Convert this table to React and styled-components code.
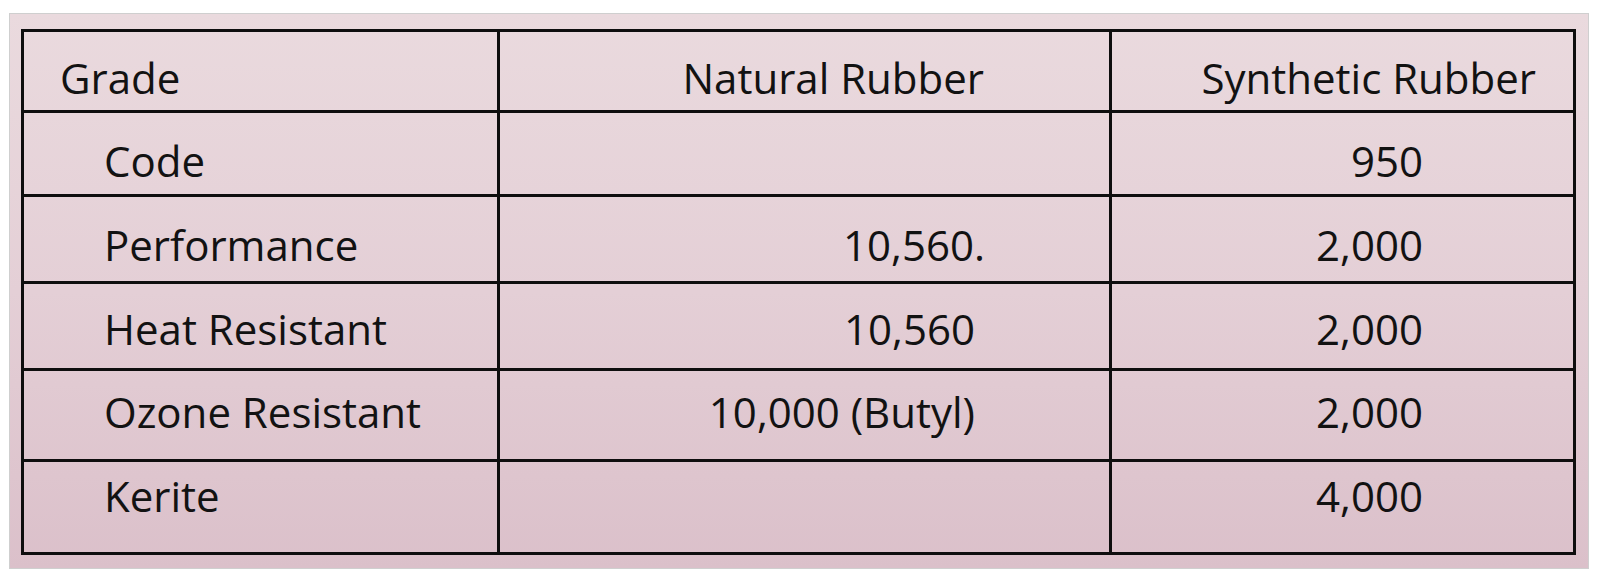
import React from 'react';
import styled, { createGlobalStyle } from 'styled-components';

const GlobalStyle = createGlobalStyle`
  html, body {
    margin: 0;
    padding: 0;
    background: #ffffff;
  }
  body {
    font-family: "Open Sans", "Noto Sans", sans-serif;
  }
`;

const Page = styled.div`
  padding: 13px 11px 10px 9px;
`;

const Panel = styled.div`
  width: 1580px;
  height: 556px;
  box-sizing: border-box;
  border: 1px solid #cfcfcf;
  background: linear-gradient(180deg, #eadade 0%, #e4cfd6 50%, #dbc0ca 100%);
  padding: 15px 14px 0 11px;
`;

const Table = styled.table`
  width: 1552px;
  table-layout: fixed;
  border-collapse: collapse;
  border: 3.5px solid #0e0e0e;
  color: #121212;
  font-size: 42px;
`;

const Col = styled.col`
  width: ${(p) => p.$w}px;
`;

const Row = styled.tr`
  height: ${(p) => p.$h}px;
`;

const Cell = styled.td`
  border: 3px solid #0e0e0e;
  padding: ${(p) => p.$top}px ${(p) => p.$right || 0}px 0 ${(p) => p.$left || 0}px;
  line-height: 1;
  vertical-align: top;
  white-space: nowrap;
  font-weight: 400;
  text-align: ${(p) => p.$align || 'left'};
`;

const HeadCell = styled(Cell).attrs({ as: 'th' })``;

const rows = [
  { label: 'Code', natural: '', synthetic: '950', h: 84, top: 27 },
  { label: 'Performance', natural: '10,560.', synthetic: '2,000', h: 87, top: 27 },
  { label: 'Heat Resistant', natural: '10,560', synthetic: '2,000', h: 87, top: 24 },
  { label: 'Ozone Resistant', natural: '10,000 (Butyl)', synthetic: '2,000', h: 91, top: 20 },
  { label: 'Kerite', natural: '', synthetic: '4,000', h: 93, top: 13 },
];

export default function App() {
  return (
    <>
      <GlobalStyle />
      <Page>
        <Panel>
          <Table>
            <colgroup>
              <Col $w={476} />
              <Col $w={612} />
              <Col $w={464} />
            </colgroup>
            <thead>
              <Row $h={81}>
                <HeadCell $top={25} $left={36}>Grade</HeadCell>
                <HeadCell $top={25} $align="right" $right={125}>Natural Rubber</HeadCell>
                <HeadCell $top={25} $align="right" $right={37}>Synthetic Rubber</HeadCell>
              </Row>
            </thead>
            <tbody>
              {rows.map((r) => (
                <Row key={r.label} $h={r.h}>
                  <Cell $top={r.top} $left={80}>{r.label}</Cell>
                  <Cell $top={r.top} $align="right" $right={r.natural.endsWith('.') ? 124 : 134}>
                    {r.natural}
                  </Cell>
                  <Cell $top={r.top} $align="right" $right={150}>{r.synthetic}</Cell>
                </Row>
              ))}
            </tbody>
          </Table>
        </Panel>
      </Page>
    </>
  );
}
